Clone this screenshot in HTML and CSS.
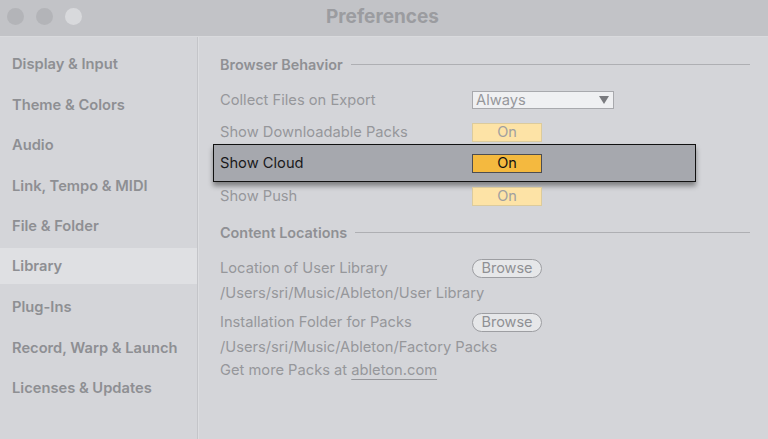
FILE: index.html
```html
<!DOCTYPE html>
<html lang="en">
<head>
    <meta charset="UTF-8">
    <meta name="viewport" content="width=device-width, initial-scale=1.0">
    <title>Preferences</title>
    <link rel="stylesheet" href="styles.css">
</head>
<body>
    <div class="window">
        <header class="titlebar">
            <div class="lights">
                <span class="light"></span>
                <span class="light"></span>
                <span class="light light-on"></span>
            </div>
            <h1>Preferences</h1>
        </header>
        <div class="main">
            <ul class="sidebar">
                <li>Display &amp; Input</li>
                <li>Theme &amp; Colors</li>
                <li>Audio</li>
                <li>Link, Tempo &amp; MIDI</li>
                <li>File &amp; Folder</li>
                <li class="selected">Library</li>
                <li>Plug-Ins</li>
                <li>Record, Warp &amp; Launch</li>
                <li>Licenses &amp; Updates</li>
            </ul>
            <div class="content">
                <h2 class="section">Browser Behavior</h2>
                <div class="row">
                    <span class="label">Collect Files on Export</span>
                    <div class="select">Always <span class="arrow"></span></div>
                </div>
                <div class="row">
                    <span class="label">Show Downloadable Packs</span>
                    <button class="toggle">On</button>
                </div>
                <div class="row row-focus">
                    <span class="label">Show Cloud</span>
                    <button class="toggle">On</button>
                </div>
                <div class="row">
                    <span class="label">Show Push</span>
                    <button class="toggle">On</button>
                </div>

                <h2 class="section">Content Locations</h2>
                <div class="row">
                    <span class="label">Location of User Library</span>
                    <button class="browse">Browse</button>
                </div>
                <p class="path">/Users/sri/Music/Ableton/User Library</p>
                <div class="row row-gap">
                    <span class="label">Installation Folder for Packs</span>
                    <button class="browse">Browse</button>
                </div>
                <p class="path">/Users/sri/Music/Ableton/Factory Packs</p>
                <p class="path path-link">Get more Packs at <a href="#">ableton.com</a></p>
            </div>
        </div>
    </div>
</body>
</html>
```

FILE: styles.css
```css
body {
    margin: 0;
    padding: 0;
    background: #d4d5d9;
    font-family: Inter, "Open Sans", sans-serif;
    color: #96979b;
}
.window {
    width: 768px;
    height: 439px;
    display: flex;
    flex-direction: column;
    overflow: hidden;
}
.titlebar {
    height: 36px;
    background: #c2c3c7;
    border-bottom: 1px solid #d9dadd;
    display: flex;
    align-items: center;
}
.lights {
    display: flex;
    gap: 12px;
    padding-left: 7px;
    margin-top: -3px;
}
.light {
    width: 17px;
    height: 17px;
    border-radius: 50%;
    background: #b3b4b8;
}
.light-on {
    background: #d8d9dc;
}
.titlebar h1 {
    flex: 1;
    margin: -4px 0 0 -85px;
    text-align: center;
    font-size: 19px;
    font-weight: 700;
    color: #9b9ca0;
}
.main {
    flex: 1;
    display: flex;
}
.sidebar {
    list-style: none;
    margin: 0;
    padding: 7px 0 0;
    width: 197px;
    border-right: 1px solid #c4c5c9;
    box-shadow: 1px 0 0 #dcdde0;
}
.sidebar li {
    height: 40.5px;
    line-height: 40px;
    padding-left: 12px;
    font-size: 14.7px;
    font-weight: 600;
    color: #8e8f93;
}
.sidebar .selected {
    background: #dfe0e3;
    height: 36px;
    line-height: 37px;
    margin: 1px 0 3.5px;
}
.content {
    flex: 1;
    padding: 17px 18px 0 22px;
}
.section {
    display: flex;
    align-items: center;
    gap: 8px;
    height: 20px;
    margin: 0 0 10px;
    font-size: 14.4px;
    font-weight: 600;
    color: #8f9094;
}
.section::after {
    content: "";
    flex: 1;
    border-top: 1px solid #aeafb3;
}
.row {
    display: flex;
    align-items: center;
    height: 32px;
    font-size: 14.7px;
}
.row + .section {
    margin-top: 10px;
}
.label {
    width: 252px;
}
.row-focus {
    height: 36px;
    margin: -4px 54px -2px -7px;
    padding-left: 6px;
    background: #a6a8ae;
    border: 1px solid #111;
    box-shadow: 0 4px 5px rgba(0, 0, 0, 0.4);
    color: #1a1a1c;
}
.select {
    width: 135px;
    height: 16px;
    padding: 0 2px 0 3px;
    background: #eff0f2;
    border: 1px solid #a8a9ad;
    display: flex;
    align-items: center;
    justify-content: space-between;
    line-height: 16px;
    color: #96979b;
}
.arrow {
    width: 0;
    height: 0;
    border-left: 5px solid transparent;
    border-right: 5px solid transparent;
    border-top: 8px solid #7a7b7f;
    margin-right: 2px;
}
.toggle {
    width: 70px;
    height: 19px;
    padding: 0;
    font-family: inherit;
    font-size: 14.5px;
    line-height: 16px;
    background: #fde3a6;
    border: 1px solid #dccb9c;
    color: #a0a0a0;
}
.row-focus .toggle {
    background: #f4b93f;
    border: 1px solid #4c4d52;
    color: #111;
}
.row-gap {
    margin-top: 4px;
}
.browse {
    width: 70px;
    height: 19px;
    padding: 0;
    font-family: inherit;
    font-size: 14.5px;
    line-height: 16px;
    background: #e6e7e9;
    border: 1px solid #9d9ea2;
    border-radius: 10px;
    color: #8f9094;
}
.path {
    margin: 0;
    height: 18px;
    line-height: 18px;
    font-size: 14.7px;
}
.path-link {
    margin-top: 5px;
}
.path a {
    color: inherit;
    text-decoration: underline;
    text-underline-offset: 4px;
}
```
